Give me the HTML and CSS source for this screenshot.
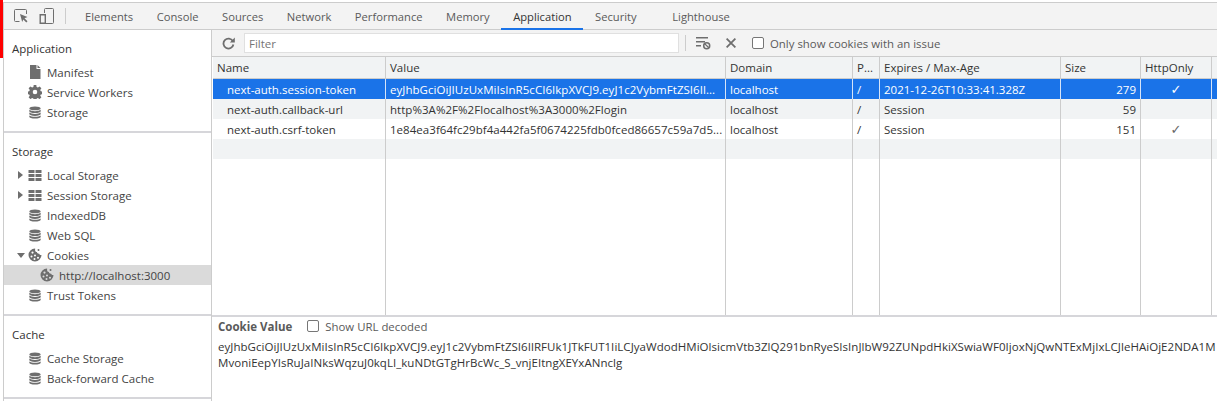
FILE: index.html
```html
<!DOCTYPE html>
<html lang="en">
<head>
<meta charset="utf-8">
<title>DevTools - Application - Cookies</title>
<link rel="stylesheet" href="styles.css">
</head>
<body>
<svg class="defs" width="0" height="0" aria-hidden="true">
  <defs>
    <symbol id="db" viewBox="0 0 13 13">
      <path fill="#6e6e6e" d="M6.5 .5C3.2.5.8 1.3.8 2.4S3.2 4.3 6.5 4.3s5.7-.8 5.7-1.900S9.800.5 6.500.5zM.8 3.800v1.400c0 1.100 2.400 1.900 5.700 1.900s5.700-.8 5.700-1.900V3.800c-1 .9-3.200 1.400-5.700 1.400S1.800 4.700.8 3.800zM.8 6.600V8c0 1.100 2.400 1.900 5.700 1.900s5.700-.8 5.700-1.900V6.600c-1 .9-3.200 1.400-5.700 1.400S1.800 7.500.8 6.600zM.8 9.400v1.300c0 1.100 2.400 1.900 5.700 1.900s5.700-.8 5.700-1.900V9.400c-1 .9-3.200 1.400-5.700 1.400S1.800 10.300.8 9.400z"/>
    </symbol>
    <symbol id="grid" viewBox="0 0 13 11">
      <path fill="#6e6e6e" d="M0 0h6v3H0zM7 0h6v3H7zM0 4h6v3H0zM7 4h6v3H7zM0 8h6v3H0zM7 8h6v3H7z"/>
    </symbol>
    <symbol id="cookie" viewBox="0 0 14 14">
      <path fill="#6e6e6e" fill-rule="evenodd" d="M7 .5a6.500 6.500 0 1 0 6.500 6.500c-1 .3-2-.2-2.300-1.200-1.100.2-2.200-.6-2.300-1.700C7.800 4 7 3 7.100 2c0-.5.1-1 0-1.500zM4.500 3.500a1.100 1.100 0 1 1 0 2.200 1.100 1.100 0 0 1 0-2.200zM3.500 7.500a1 1 0 1 1 0 2 1 1 0 0 1 0-2zM7 6.500a1 1 0 1 1 0 2 1 1 0 0 1 0-2zM6.500 10a1 1 0 1 1 0 2 1 1 0 0 1 0-2zM10 8.800a1 1 0 1 1 0 2 1 1 0 0 1 0-2z"/>
      <circle cx="10.500" cy="2" r="1" fill="#6e6e6e"/>
    </symbol>
  </defs>
</svg>
<div class="red-flag"></div>
<div class="window">
  <header class="topbar">
    <div class="tools">
      <svg class="tool-icon" width="14" height="14" viewBox="0 0 14 14">
        <path fill="none" stroke="#6e6e6e" stroke-width="1" d="M5.500 12.500H1.500a1 1 0 0 1-1-1V1.500a1 1 0 0 1 1-1h10a1 1 0 0 1 1 1V5"/>
        <path fill="#6e6e6e" d="M6 5l7.500 3-3 1.300 3 3-1.200 1.200-3-3L8.200 13z"/>
      </svg>
      <svg class="tool-icon" width="15" height="16" viewBox="0 0 15 16">
        <path fill="none" stroke="#6e6e6e" stroke-width="1" d="M5.500 5V1.500a1 1 0 0 1 1-1h7a1 1 0 0 1 1 1v13a1 1 0 0 1-1 1H7"/>
        <path fill="none" stroke="#6e6e6e" stroke-width="1.400" d="M1.200 6.700h5.100v8.600H1.200z"/>
      </svg>
      <span class="vline"></span>
    </div>
    <nav class="tabs">
      <a class="tab">Elements</a>
      <a class="tab">Console</a>
      <a class="tab">Sources</a>
      <a class="tab">Network</a>
      <a class="tab">Performance</a>
      <a class="tab">Memory</a>
      <a class="tab tab-active">Application</a>
      <a class="tab">Security</a>
      <a class="tab tab-far">Lighthouse</a>
    </nav>
  </header>
  <div class="body">
    <aside class="sidebar">
      <section class="group group-app">
        <h2 class="group-title">Application</h2>
        <ul class="tree">
          <li class="item"><svg class="ic" width="13" height="14" viewBox="0 0 13 14"><path fill="#6e6e6e" d="M1.500 0H8v4h4v10H1.500zM9 0l3 3H9z"/></svg>Manifest</li>
          <li class="item"><svg class="ic" width="14" height="14" viewBox="0 0 14 14"><path fill="#6e6e6e" fill-rule="evenodd" d="M5.700 0h2.600l.3 2 1.300.6L11.600 1.500l1.800 1.800-1.200 1.700.6 1.200 2 .3v2.600l-2 .3-.6 1.300 1.200 1.600-1.800 1.800-1.700-1.200-1.200.6-.3 2H5.700l-.3-2-1.300-.6-1.700 1.200L.6 12.300l1.200-1.600-.6-1.300-2-.3V6.500l2-.3.6-1.200L.6 3.300l1.800-1.800 1.700 1.100 1.300-.6zM7 4.700a2.300 2.300 0 1 0 0 4.600 2.300 2.300 0 0 0 0-4.600z"/></svg>Service Workers</li>
          <li class="item"><svg class="ic" width="13" height="13"><use href="#db"/></svg>Storage</li>
        </ul>
      </section>
      <section class="group group-storage">
        <h2 class="group-title">Storage</h2>
        <ul class="tree">
          <li class="item"><span class="arrow arrow-right"></span><svg class="ic" width="13" height="11"><use href="#grid"/></svg>Local Storage</li>
          <li class="item"><span class="arrow arrow-right"></span><svg class="ic" width="13" height="11"><use href="#grid"/></svg>Session Storage</li>
          <li class="item"><svg class="ic" width="13" height="13"><use href="#db"/></svg>IndexedDB</li>
          <li class="item"><svg class="ic" width="13" height="13"><use href="#db"/></svg>Web SQL</li>
          <li class="item"><span class="arrow arrow-down"></span><svg class="ic" width="14" height="14"><use href="#cookie"/></svg>Cookies</li>
          <li class="item item-child item-selected"><svg class="ic" width="14" height="14"><use href="#cookie"/></svg>http://localhost:3000</li>
          <li class="item"><svg class="ic" width="13" height="13"><use href="#db"/></svg>Trust Tokens</li>
        </ul>
      </section>
      <section class="group group-cache">
        <h2 class="group-title">Cache</h2>
        <ul class="tree">
          <li class="item"><svg class="ic" width="13" height="13"><use href="#db"/></svg>Cache Storage</li>
          <li class="item"><svg class="ic" width="13" height="13"><use href="#db"/></svg>Back-forward Cache</li>
        </ul>
      </section>
    </aside>
    <main class="main">
      <div class="filterbar">
        <svg class="refresh" width="13" height="13" viewBox="0 0 13 13">
          <path fill="none" stroke="#6e6e6e" stroke-width="1.800" d="M10.800 4A5 5 0 1 0 11.400 7.500"/>
          <path fill="#6e6e6e" d="M12.800.6v5h-5z"/>
        </svg>
        <input class="filter" type="text" placeholder="Filter">
        <span class="vline vline-filter"></span>
        <svg class="clear-filter" width="15" height="14" viewBox="0 0 15 14">
          <path fill="none" stroke="#6e6e6e" stroke-width="1.500" d="M0 1.800h12M0 5.800h9M0 9.800h5"/>
          <circle cx="10.700" cy="9.700" r="3" fill="none" stroke="#6e6e6e" stroke-width="1.500"/>
          <path stroke="#6e6e6e" stroke-width="1.300" d="M8.600 7.600l4.200 4.200"/>
        </svg>
        <svg class="clear-all" width="10" height="10" viewBox="0 0 10 10">
          <path stroke="#6e6e6e" stroke-width="1.800" d="M.6.600l8.800 8.800M9.400.600L.6 9.400"/>
        </svg>
        <label class="check-label"><span class="check"></span>Only show cookies with an issue</label>
      </div>
      <div class="table-wrap">
        <table class="cookies">
          <colgroup>
            <col class="c-name"><col class="c-value"><col class="c-domain"><col class="c-path"><col class="c-exp"><col class="c-size"><col class="c-http"><col class="c-more">
          </colgroup>
          <thead>
            <tr><th>Name</th><th>Value</th><th>Domain</th><th>P...</th><th>Expires / Max-Age</th><th>Size</th><th>HttpOnly</th><th></th></tr>
          </thead>
          <tbody>
            <tr class="row-selected"><td class="name">next-auth.session-token</td><td class="val">eyJhbGciOiJIUzUxMiIsInR5cCI6IkpXVCJ9.eyJ1c2VybmFtZSI6Il...</td><td>localhost</td><td>/</td><td>2021-12-26T10:33:41.328Z</td><td class="num">279</td><td class="tick">✓</td><td></td></tr>
            <tr class="row-alt"><td class="name">next-auth.callback-url</td><td class="val">http%3A%2F%2Flocalhost%3A3000%2Flogin</td><td>localhost</td><td>/</td><td>Session</td><td class="num">59</td><td class="tick"></td><td></td></tr>
            <tr><td class="name">next-auth.csrf-token</td><td class="val">1e84ea3f64fc29bf4a442fa5f0674225fdb0fced86657c59a7d5...</td><td>localhost</td><td>/</td><td>Session</td><td class="num">151</td><td class="tick">✓</td><td></td></tr>
            <tr class="row-alt"><td></td><td></td><td></td><td></td><td></td><td></td><td></td><td></td></tr>
            <tr class="row-fill"><td></td><td></td><td></td><td></td><td></td><td></td><td></td><td></td></tr>
          </tbody>
        </table>
      </div>
      <section class="value-pane">
        <div class="value-head"><strong class="value-title">Cookie Value</strong><label class="check-label"><span class="check"></span>Show URL decoded</label></div>
        <p class="value-text">eyJhbGciOiJIUzUxMiIsInR5cCI6IkpXVCJ9.eyJ1c2VybmFtZSI6IlRFUk1JTkFUT1IiLCJyaWdodHMiOlsicmVtb3ZlQ291bnRyeSIsInJlbW92ZUNpdHkiXSwiaWF0IjoxNjQwNTExMjIxLCJleHAiOjE2NDA1M</p>
        <p class="value-text">MvoniEepYIsRuJaINksWqzuJ0kqLI_kuNDtGTgHrBcWc_S_vnjEItngXEYxANnclg</p>
      </section>
    </main>
  </div>
</div>
</body>
</html>
```
FILE: styles.css
```css
* { box-sizing: border-box; }
html, body { margin: 0; padding: 0; height: 401px; overflow: hidden; background: #fff; }
body { font-family: "Open Sans", "Noto Sans", sans-serif; font-size: 11.5px; color: #333; }
.defs { position: absolute; }
.red-flag { position: absolute; left: 0; top: 0; width: 3px; height: 58px; background: #f00; z-index: 2; }
.window { height: 401px; padding: 2px 0 0 3px; display: flex; flex-direction: column; }
.topbar { height: 28px; flex: none; display: flex; align-items: center; background: #f3f3f3; border-top: 1px solid #ccc; border-bottom: 1px solid #ccc; border-left: 1px solid #ccc; }
.tools { display: flex; align-items: center; padding-left: 10px; width: 69px; }
.tool-icon { flex: none; margin-right: 11px; }
.vline { width: 1px; height: 16px; background: #ccc; flex: none; }
.tabs { display: flex; height: 100%; padding-left: .3px; }
.tab { display: flex; align-items: center; padding: 0 11.75px; color: #5a5a5a; font-size: 11.2px; height: 100%; }
.tab-active { color: #333; border-bottom: 2px solid #1a73e8; padding-top: 2px; height: calc(100% + 1px); }
.tab-far { margin-left: 12px; }
.body { flex: 1; min-height: 0; display: flex; }
.sidebar { width: 209px; flex: none; border-left: 1px solid #ccc; border-right: 1px solid #ccc; display: flex; flex-direction: column; background: #fff; }
.group { border-bottom: 2px solid #d6d6da; }
.group-app { height: 103px; padding-top: 10px; }
.group-storage { height: 183px; padding-top: 10px; }
.group-cache { height: 83px; padding-top: 10px; }
.group-title { margin: 0; font-size: 11.5px; font-weight: 400; color: #333; padding-left: 8px; height: 18px; line-height: 18px; }
.tree { list-style: none; margin: 4px 0 0; padding: 0; }
.item { position: relative; height: 20px; display: flex; align-items: center; padding-left: 21px; color: #444; }
.ic { flex: none; margin-left: 3px; margin-right: 5px; width: 14px; }
.item-child { padding-left: 33px; }
.item-selected { background: #dadada; }
.arrow { position: absolute; width: 0; height: 0; }
.arrow-right { left: 14px; top: 6px; border-left: 5px solid #6e6e6e; border-top: 4px solid transparent; border-bottom: 4px solid transparent; }
.arrow-down { left: 13px; top: 8px; border-top: 5px solid #6e6e6e; border-left: 4px solid transparent; border-right: 4px solid transparent; }
.main { flex: 1; min-width: 0; display: flex; flex-direction: column; }
.filterbar { height: 27px; flex: none; display: flex; align-items: center; background: #f3f3f3; border-bottom: 1px solid #ccc; padding-left: 10px; }
.refresh { flex: none; margin-right: 9px; }
.filter { width: 435px; height: 20px; border: 1px solid #e0e0e0; background: #fff; padding: 0 4px; font: inherit; color: #333; }
.filter::placeholder { color: #757575; opacity: 1; }
.vline-filter { margin-left: 6px; margin-right: 10px; }
.clear-filter { flex: none; margin-right: 15px; }
.clear-all { flex: none; margin-right: 16px; }
.check-label { display: flex; align-items: center; color: #5a5a5a; font-size: 11.4px; }
.check { width: 12px; height: 12px; border: 1px solid #767676; border-radius: 2px; background: #fff; margin-right: 6px; flex: none; }
.table-wrap { flex: none; height: 258px; overflow: hidden; padding-left: 1px; }
.cookies { table-layout: fixed; border-collapse: separate; border-spacing: 0; width: 1005px; height: 258px; }
.c-name { width: 173px; } .c-value { width: 340px; } .c-domain { width: 127px; } .c-path { width: 27px; } .c-exp { width: 181px; } .c-size { width: 80px; } .c-http { width: 71px; } .c-more { width: 6px; }
.cookies th { height: 22px; font-weight: 400; text-align: left; background: #f1f3f4; border-bottom: 1px solid #ccc; border-right: 1px solid #ccc; padding: 0 4px; color: #333; overflow: hidden; white-space: nowrap; }
.cookies td { height: 20px; padding: 0 4px; border-right: 1px solid #ccc; color: #333; overflow: hidden; white-space: nowrap; }
.cookies th:last-child, .cookies td:last-child { border-right: 0; }
.cookies td.name { padding-left: 14px; }
.cookies td.val { letter-spacing: .04px; }
.cookies td.num { text-align: right; }
.cookies td.tick { text-align: center; font-family: "DejaVu Sans", sans-serif; font-size: 13px; font-weight: 400; color: #666; }
.row-alt td { background: #f1f3f4; }
.cookies .row-selected td { background: #1a73e8; color: #fff; border-right-color: #d6e4f8; }
.cookies .row-fill td { height: auto; }
.value-pane { flex: 1; min-height: 0; border-top: 2px solid #d6d6da; padding: 0 6px; overflow: hidden; }
.value-head { display: flex; align-items: center; height: 18px; margin-bottom: 4px; }
.value-title { font-weight: 700; color: #5a5a5a; margin-right: 15px; }
.value-text { margin: 0; white-space: nowrap; line-height: 16px; color: #333; letter-spacing: .04px; }
```
